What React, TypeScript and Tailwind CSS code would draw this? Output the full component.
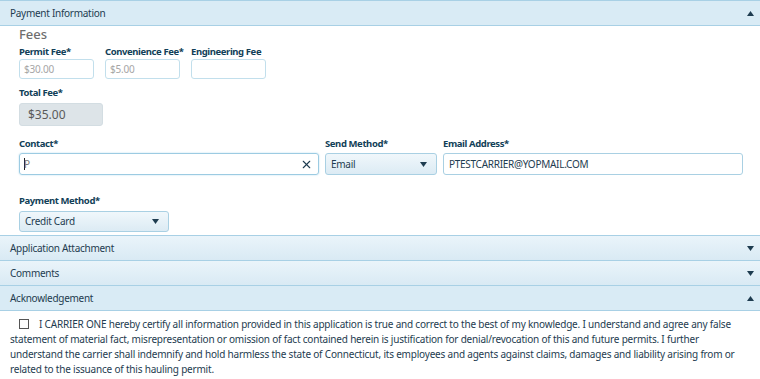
import { X } from "lucide-react";

const font = { fontFamily: '"Segoe UI", "Noto Sans", "Open Sans", sans-serif' };

function Caret({ up }: { up?: boolean }) {
  return (
    <svg width="7" height="5" viewBox="0 0 7 5" className="text-[#1e3c50]">
      {up ? <path d="M0 5 L3.5 0 L7 5 Z" fill="currentColor" /> : <path d="M0 0 L7 0 L3.5 5 Z" fill="currentColor" />}
    </svg>
  );
}

function SectionHeader({ title, open }: { title: string; open?: boolean }) {
  return (
    <div
      className={
        "flex items-center justify-between h-[25px] pl-[10px] pr-[6px] border-b border-[#a8d0e5] text-[10px] text-[#1e3c50] tracking-[-0.28px] " +
        (open ? "bg-[#d9ebf5]" : "bg-gradient-to-b from-[#eaf4fa] to-[#d9eaf4]")
      }
    >
      <span>{title}</span>
      <Caret up={open} />
    </div>
  );
}

function Label({ children, mb = "mb-[3px]" }: { children: React.ReactNode; mb?: string }) {
  return (
    <div className={"text-[9.5px] font-bold text-[#123f58] leading-[13px] whitespace-nowrap tracking-[-0.4px] " + mb}>
      {children}
    </div>
  );
}

function SelectBox({ value, width, h }: { value: string; width: string; h: string }) {
  return (
    <div
      className={
        width +
        " " +
        h +
        " flex items-center justify-between pl-[5px] pr-[9px] rounded-[3px] border border-[#a9d0e3] bg-gradient-to-b from-[#f0f7fb] to-[#dcebf4] text-[10px] text-[#1e3c50] tracking-[-0.28px]"
      }
    >
      <span>{value}</span>
      <Caret />
    </div>
  );
}

export default function App() {
  return (
    <div className="w-[760px] h-[379px] bg-white overflow-hidden" style={font}>
      <div className="border-t border-[#a8d0e5]">
        <SectionHeader title="Payment Information" open />
      </div>

      <div className="pl-[19px] pb-[3px]">
        <div className="text-[13px] text-[#6e6e6e] leading-[16px] font-medium">Fees</div>
        <div className="flex gap-[11px] mt-[3px]">
          {[
            { l: "Permit Fee*", v: "$30.00" },
            { l: "Convenience Fee*", v: "$5.00" },
            { l: "Engineering Fee", v: "" },
          ].map((f) => (
            <div key={f.l} className="w-[75px]">
              <Label mb="mb-[1px]">{f.l}</Label>
              <div className="h-[20px] w-[75px] rounded-[3px] border border-[#c2dfec] px-[4px] flex items-center text-[10px] text-[#a6a6a6] tracking-[-0.2px]">
                {f.v}
              </div>
            </div>
          ))}
        </div>

        <div className="mt-[7px]">
          <Label mb="mb-[4px]">Total Fee*</Label>
          <div className="h-[23px] w-[84px] rounded-[3px] bg-[#dde4e8] border border-[#d3dde2] flex items-center pl-[8px] text-[12px] text-[#5a5a5a]">
            $35.00
          </div>
        </div>

        <div className="flex gap-[6px] mt-[11px]">
          <div>
            <Label>Contact*</Label>
            <div className="w-[300px] h-[22px] rounded-[3px] border border-[#9ccbe2] flex items-center justify-between pl-[4px] pr-[5px] shadow-[0_0_2px_#b8dcee]">
              <span className="flex items-center text-[10px] text-[#7a7a7a]">
                <span className="w-px h-[12px] bg-[#222] mr-[-1px]" />P
              </span>
              <X size={13} strokeWidth={2} className="text-[#1e3c50]" />
            </div>
          </div>
          <div>
            <Label>Send Method*</Label>
            <SelectBox value="Email" width="w-[112px]" h="h-[22px]" />
          </div>
          <div>
            <Label>Email Address*</Label>
            <div className="w-[300px] h-[22px] rounded-[3px] border border-[#a9d0e3] flex items-center pl-[5px] text-[10px] text-[#1e3c50] tracking-[-0.28px]">
              PTESTCARRIER@YOPMAIL.COM
            </div>
          </div>
        </div>

        <div className="mt-[19px]">
          <Label mb="mb-[4px]">Payment Method*</Label>
          <SelectBox value="Credit Card" width="w-[150px]" h="h-[21px]" />
        </div>
      </div>

      <div className="border-t border-[#a8d0e5]">
        <SectionHeader title="Application Attachment" />
        <SectionHeader title="Comments" />
        <SectionHeader title="Acknowledgement" open />
      </div>

      <div className="px-[10px] pt-[6px] pb-[2px] text-[10px] leading-[15px] text-[#1e3c50] tracking-[-0.2px] border-b-2 border-[#a8d0e5]">
        <span className="inline-block w-[10px] h-[10px] border border-[#555] ml-[9px] mr-[10px] align-[-1px] bg-white" />
        I CARRIER ONE hereby certify all information provided in this application is true and correct to the best of my knowledge. I understand and agree any false statement of material fact, misrepresentation or omission of fact contained herein is justification for denial/revocation of this and future permits. I further understand the carrier shall indemnify and hold harmless the state of Connecticut, its employees and agents against claims, damages and liability arising from or related to the issuance of this hauling permit.
      </div>
    </div>
  );
}
